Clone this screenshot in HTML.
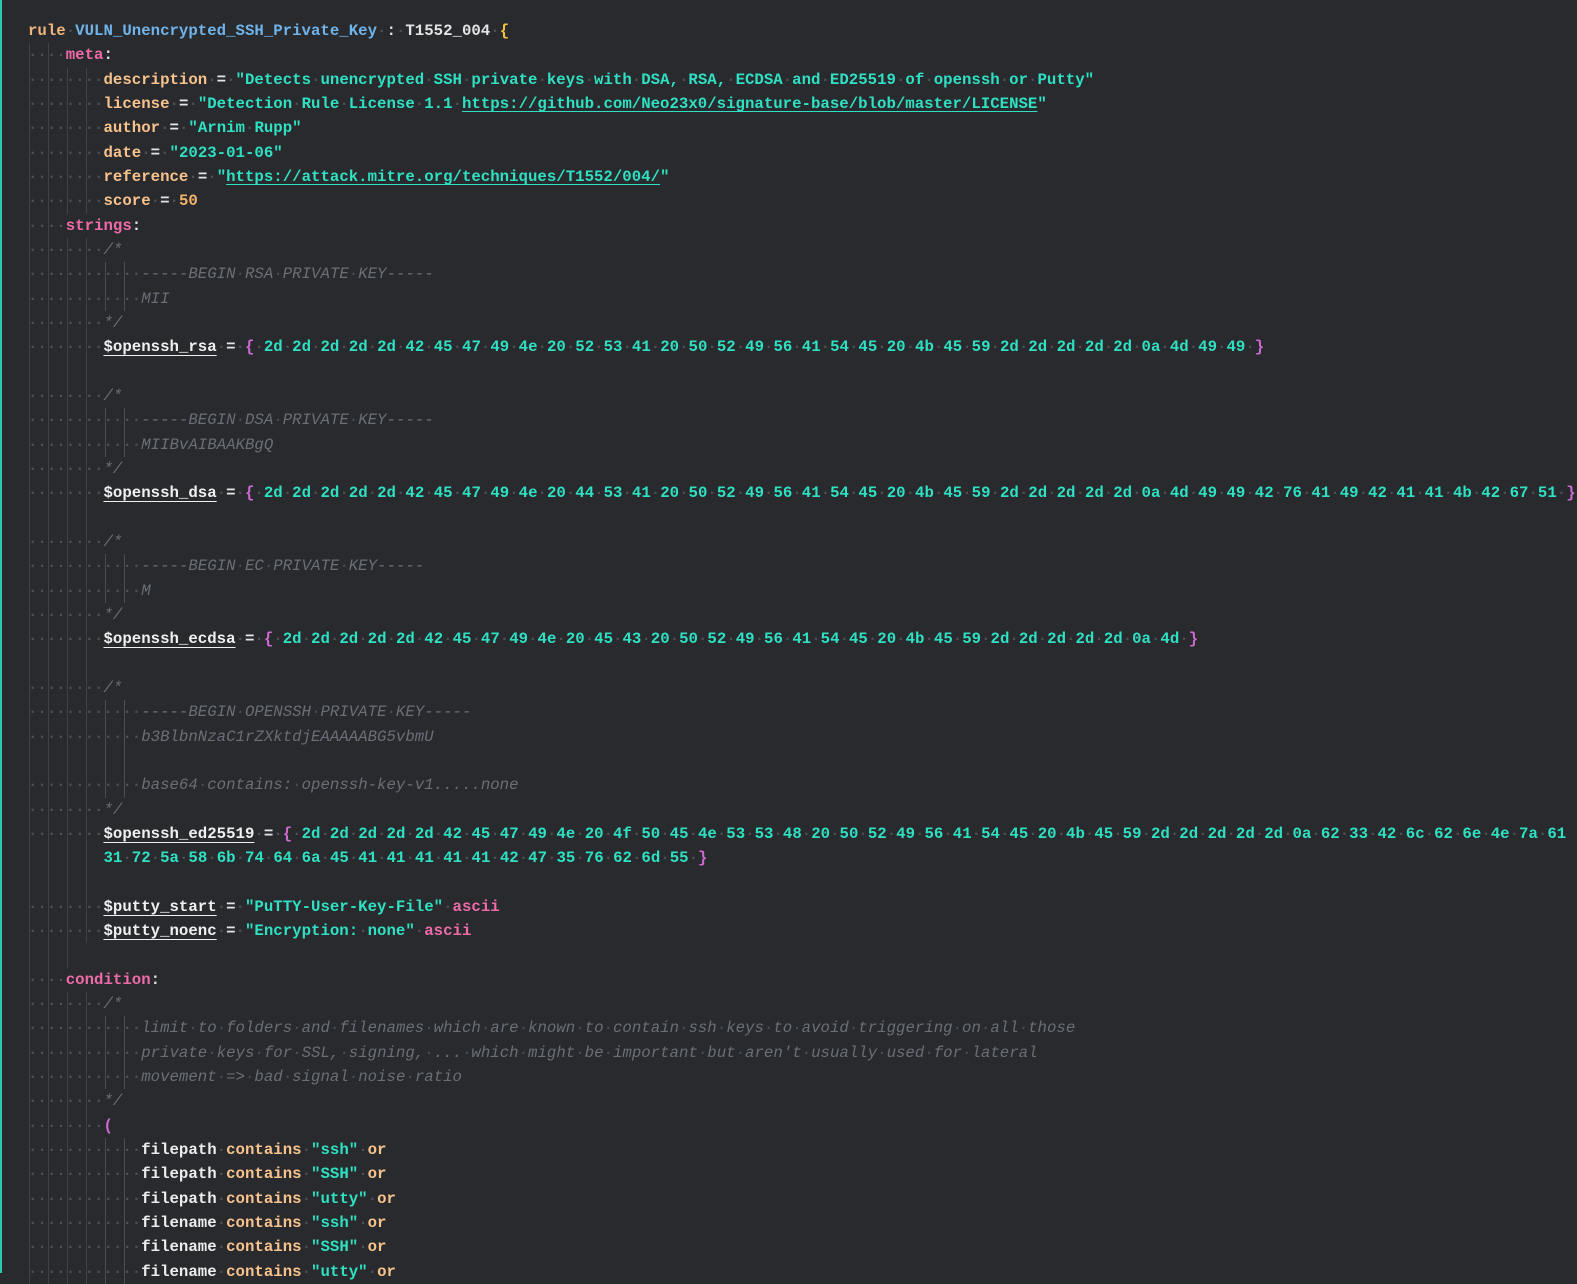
<!DOCTYPE html>
<html><head><meta charset="utf-8"><style>
html,body{margin:0;padding:0;background:#282a2d;width:1577px;height:1273px;overflow:hidden}
#bar{position:absolute;left:0;top:0;width:2px;height:1273px;background:#2cc9b0}
#code{position:absolute;left:28px;top:19px;font-family:"Liberation Mono",monospace;font-size:15.72px;font-weight:bold;color:#4c4f55;white-space:normal}
#code div{white-space:pre;height:24.33px;line-height:24.33px;margin-left:-28px;padding-left:28px;width:3000px}
i{font-style:normal;color:#4c4f55}
.k{color:#f0b47e}.n{color:#6fb3ea}.t{color:#e4e4e4}.y{color:#f2c23c}.p{color:#ee6aa9}
.o{color:#f8c28c}.s{color:#2fe0c3}.u{text-decoration:underline;text-underline-offset:3px}
.c{color:#6a6e77;font-style:italic;font-weight:normal}.c i{font-style:italic}
.v{color:#f0f0f0;text-decoration:underline;text-underline-offset:4px}
.b{color:#d06ad2}.a{color:#ee6aa9}.f{color:#ececec}.e{color:#e4e4e4}.num{color:#f5b36b}
.g2{background:linear-gradient(#3f4247,#3f4247) 29px 0/1px 100% no-repeat,linear-gradient(#3f4247,#3f4247) 48px 0/1px 100% no-repeat}
.g4{background:linear-gradient(#3f4247,#3f4247) 29px 0/1px 100% no-repeat,linear-gradient(#3f4247,#3f4247) 48px 0/1px 100% no-repeat,linear-gradient(#3f4247,#3f4247) 67px 0/1px 100% no-repeat}
.g6{background:linear-gradient(#3f4247,#3f4247) 29px 0/1px 100% no-repeat,linear-gradient(#3f4247,#3f4247) 48px 0/1px 100% no-repeat,linear-gradient(#3f4247,#3f4247) 67px 0/1px 100% no-repeat,linear-gradient(#3f4247,#3f4247) 86px 0/1px 100% no-repeat}
.g10{background:linear-gradient(#3f4247,#3f4247) 29px 0/1px 100% no-repeat,linear-gradient(#3f4247,#3f4247) 48px 0/1px 100% no-repeat,linear-gradient(#3f4247,#3f4247) 67px 0/1px 100% no-repeat,linear-gradient(#3f4247,#3f4247) 86px 0/1px 100% no-repeat,linear-gradient(#4a4d52,#4a4d52) 105px 0/1px 100% no-repeat,linear-gradient(#4a4d52,#4a4d52) 124px 0/1px 100% no-repeat}
</style></head><body><div id="bar"></div><div id="code">
<div><span class="k">rule</span>·<span class="n">VULN_Unencrypted_SSH_Private_Key</span>·<span class="e">:</span>·<span class="t">T1552_004</span>·<span class="y">{</span></div>
<div class="g2">····<span class="p">meta</span><span class="e">:</span></div>
<div class="g6">········<span class="o">description</span>·<span class="e">=</span>·<span class="s">"Detects<i>·</i>unencrypted<i>·</i>SSH<i>·</i>private<i>·</i>keys<i>·</i>with<i>·</i>DSA,<i>·</i>RSA,<i>·</i>ECDSA<i>·</i>and<i>·</i>ED25519<i>·</i>of<i>·</i>openssh<i>·</i>or<i>·</i>Putty"</span></div>
<div class="g6">········<span class="o">license</span>·<span class="e">=</span>·<span class="s">"Detection<i>·</i>Rule<i>·</i>License<i>·</i>1.1<i>·</i><span class="u">https://github.com/Neo23x0/signature-base/blob/master/LICENSE</span>"</span></div>
<div class="g6">········<span class="o">author</span>·<span class="e">=</span>·<span class="s">"Arnim<i>·</i>Rupp"</span></div>
<div class="g6">········<span class="o">date</span>·<span class="e">=</span>·<span class="s">"2023-01-06"</span></div>
<div class="g6">········<span class="o">reference</span>·<span class="e">=</span>·<span class="s">"<span class="u">https://attack.mitre.org/techniques/T1552/004/</span>"</span></div>
<div class="g6">········<span class="o">score</span>·<span class="e">=</span>·<span class="num">50</span></div>
<div class="g2">····<span class="p">strings</span><span class="e">:</span></div>
<div class="g6">········<span class="c">/*</span></div>
<div class="g10">············<span class="c">-----BEGIN<i>·</i>RSA<i>·</i>PRIVATE<i>·</i>KEY-----</span></div>
<div class="g10">············<span class="c">MII</span></div>
<div class="g6">········<span class="c">*/</span></div>
<div class="g6">········<span class="v">$openssh_rsa</span>·<span class="e">=</span>·<span class="b">{</span>·<span class="s">2d<i>·</i>2d<i>·</i>2d<i>·</i>2d<i>·</i>2d<i>·</i>42<i>·</i>45<i>·</i>47<i>·</i>49<i>·</i>4e<i>·</i>20<i>·</i>52<i>·</i>53<i>·</i>41<i>·</i>20<i>·</i>50<i>·</i>52<i>·</i>49<i>·</i>56<i>·</i>41<i>·</i>54<i>·</i>45<i>·</i>20<i>·</i>4b<i>·</i>45<i>·</i>59<i>·</i>2d<i>·</i>2d<i>·</i>2d<i>·</i>2d<i>·</i>2d<i>·</i>0a<i>·</i>4d<i>·</i>49<i>·</i>49</span>·<span class="b">}</span></div>
<div class="g6"></div>
<div class="g6">········<span class="c">/*</span></div>
<div class="g10">············<span class="c">-----BEGIN<i>·</i>DSA<i>·</i>PRIVATE<i>·</i>KEY-----</span></div>
<div class="g10">············<span class="c">MIIBvAIBAAKBgQ</span></div>
<div class="g6">········<span class="c">*/</span></div>
<div class="g6">········<span class="v">$openssh_dsa</span>·<span class="e">=</span>·<span class="b">{</span>·<span class="s">2d<i>·</i>2d<i>·</i>2d<i>·</i>2d<i>·</i>2d<i>·</i>42<i>·</i>45<i>·</i>47<i>·</i>49<i>·</i>4e<i>·</i>20<i>·</i>44<i>·</i>53<i>·</i>41<i>·</i>20<i>·</i>50<i>·</i>52<i>·</i>49<i>·</i>56<i>·</i>41<i>·</i>54<i>·</i>45<i>·</i>20<i>·</i>4b<i>·</i>45<i>·</i>59<i>·</i>2d<i>·</i>2d<i>·</i>2d<i>·</i>2d<i>·</i>2d<i>·</i>0a<i>·</i>4d<i>·</i>49<i>·</i>49<i>·</i>42<i>·</i>76<i>·</i>41<i>·</i>49<i>·</i>42<i>·</i>41<i>·</i>41<i>·</i>4b<i>·</i>42<i>·</i>67<i>·</i>51</span>·<span class="b">}</span></div>
<div class="g6"></div>
<div class="g6">········<span class="c">/*</span></div>
<div class="g10">············<span class="c">-----BEGIN<i>·</i>EC<i>·</i>PRIVATE<i>·</i>KEY-----</span></div>
<div class="g10">············<span class="c">M</span></div>
<div class="g6">········<span class="c">*/</span></div>
<div class="g6">········<span class="v">$openssh_ecdsa</span>·<span class="e">=</span>·<span class="b">{</span>·<span class="s">2d<i>·</i>2d<i>·</i>2d<i>·</i>2d<i>·</i>2d<i>·</i>42<i>·</i>45<i>·</i>47<i>·</i>49<i>·</i>4e<i>·</i>20<i>·</i>45<i>·</i>43<i>·</i>20<i>·</i>50<i>·</i>52<i>·</i>49<i>·</i>56<i>·</i>41<i>·</i>54<i>·</i>45<i>·</i>20<i>·</i>4b<i>·</i>45<i>·</i>59<i>·</i>2d<i>·</i>2d<i>·</i>2d<i>·</i>2d<i>·</i>2d<i>·</i>0a<i>·</i>4d</span>·<span class="b">}</span></div>
<div class="g6"></div>
<div class="g6">········<span class="c">/*</span></div>
<div class="g10">············<span class="c">-----BEGIN<i>·</i>OPENSSH<i>·</i>PRIVATE<i>·</i>KEY-----</span></div>
<div class="g10">············<span class="c">b3BlbnNzaC1rZXktdjEAAAAABG5vbmU</span></div>
<div class="g10"></div>
<div class="g10">············<span class="c">base64<i>·</i>contains:<i>·</i>openssh-key-v1.....none</span></div>
<div class="g6">········<span class="c">*/</span></div>
<div class="g6">········<span class="v">$openssh_ed25519</span>·<span class="e">=</span>·<span class="b">{</span>·<span class="s">2d<i>·</i>2d<i>·</i>2d<i>·</i>2d<i>·</i>2d<i>·</i>42<i>·</i>45<i>·</i>47<i>·</i>49<i>·</i>4e<i>·</i>20<i>·</i>4f<i>·</i>50<i>·</i>45<i>·</i>4e<i>·</i>53<i>·</i>53<i>·</i>48<i>·</i>20<i>·</i>50<i>·</i>52<i>·</i>49<i>·</i>56<i>·</i>41<i>·</i>54<i>·</i>45<i>·</i>20<i>·</i>4b<i>·</i>45<i>·</i>59<i>·</i>2d<i>·</i>2d<i>·</i>2d<i>·</i>2d<i>·</i>2d<i>·</i>0a<i>·</i>62<i>·</i>33<i>·</i>42<i>·</i>6c<i>·</i>62<i>·</i>6e<i>·</i>4e<i>·</i>7a<i>·</i>61</span></div>
<div class="g6">        <span class="s">31<i>·</i>72<i>·</i>5a<i>·</i>58<i>·</i>6b<i>·</i>74<i>·</i>64<i>·</i>6a<i>·</i>45<i>·</i>41<i>·</i>41<i>·</i>41<i>·</i>41<i>·</i>41<i>·</i>42<i>·</i>47<i>·</i>35<i>·</i>76<i>·</i>62<i>·</i>6d<i>·</i>55</span>·<span class="b">}</span></div>
<div class="g6"></div>
<div class="g6">········<span class="v">$putty_start</span>·<span class="e">=</span>·<span class="s">"PuTTY-User-Key-File"</span>·<span class="a">ascii</span></div>
<div class="g6">········<span class="v">$putty_noenc</span>·<span class="e">=</span>·<span class="s">"Encryption:<i>·</i>none"</span>·<span class="a">ascii</span></div>
<div class="g4"></div>
<div class="g2">····<span class="p">condition</span><span class="e">:</span></div>
<div class="g6">········<span class="c">/*</span></div>
<div class="g10">············<span class="c">limit<i>·</i>to<i>·</i>folders<i>·</i>and<i>·</i>filenames<i>·</i>which<i>·</i>are<i>·</i>known<i>·</i>to<i>·</i>contain<i>·</i>ssh<i>·</i>keys<i>·</i>to<i>·</i>avoid<i>·</i>triggering<i>·</i>on<i>·</i>all<i>·</i>those</span></div>
<div class="g10">············<span class="c">private<i>·</i>keys<i>·</i>for<i>·</i>SSL,<i>·</i>signing,<i>·</i>...<i>·</i>which<i>·</i>might<i>·</i>be<i>·</i>important<i>·</i>but<i>·</i>aren't<i>·</i>usually<i>·</i>used<i>·</i>for<i>·</i>lateral</span></div>
<div class="g10">············<span class="c">movement<i>·</i>=&gt;<i>·</i>bad<i>·</i>signal<i>·</i>noise<i>·</i>ratio</span></div>
<div class="g6">········<span class="c">*/</span></div>
<div class="g6">········<span class="b">(</span></div>
<div class="g10">············<span class="f">filepath</span>·<span class="o">contains</span>·<span class="s">"ssh"</span>·<span class="o">or</span></div>
<div class="g10">············<span class="f">filepath</span>·<span class="o">contains</span>·<span class="s">"SSH"</span>·<span class="o">or</span></div>
<div class="g10">············<span class="f">filepath</span>·<span class="o">contains</span>·<span class="s">"utty"</span>·<span class="o">or</span></div>
<div class="g10">············<span class="f">filename</span>·<span class="o">contains</span>·<span class="s">"ssh"</span>·<span class="o">or</span></div>
<div class="g10">············<span class="f">filename</span>·<span class="o">contains</span>·<span class="s">"SSH"</span>·<span class="o">or</span></div>
<div class="g10">············<span class="f">filename</span>·<span class="o">contains</span>·<span class="s">"utty"</span>·<span class="o">or</span></div>
</div></body></html>
